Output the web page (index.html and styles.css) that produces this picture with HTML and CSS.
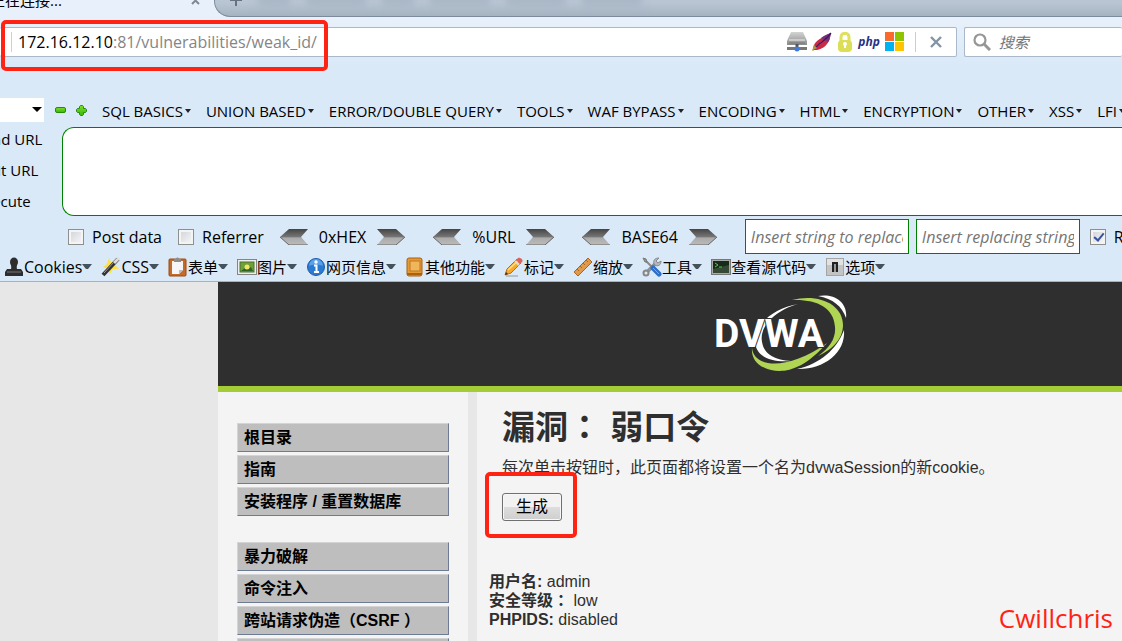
FILE: index.html
```
<!DOCTYPE html>
<html lang="zh-CN">
<head>
  <meta charset="UTF-8" />
  <meta name="viewport" content="width=device-width, initial-scale=1.0"/>
  <title>漏洞： 弱口令</title>
  <link rel="stylesheet" href="styles.css">
</head>

<body>
  <!-- Shared shapes -->
  <svg class="defs" aria-hidden="true">
    <defs>
      <linearGradient id="steel" x1="0" y1="0" x2="0" y2="1">
        <stop offset="0" stop-color="#444"/>
        <stop offset=".5" stop-color="#777"/>
        <stop offset=".55" stop-color="#aaa"/>
        <stop offset="1" stop-color="#bbb"/>
      </linearGradient>
      <linearGradient id="green" x1="0" y1="0" x2="0" y2="1">
        <stop offset="0" stop-color="#7fdc2c"/>
        <stop offset="1" stop-color="#35b80a"/>
      </linearGradient>
      <linearGradient id="silver" x1="0" y1="0" x2="0" y2="1">
        <stop offset="0" stop-color="#d4d4d4"/>
        <stop offset="1" stop-color="#8a8a8a"/>
      </linearGradient>
      <symbol id="arrow-left" viewBox="0 0 28 16">
        <path d="M0 8 9 0H28L21 8l7 8H9z" fill="url(#steel)"/>
        <path d="M0 8 9 16H28" fill="none" stroke="#666"/>
      </symbol>
      <symbol id="arrow-right" viewBox="0 0 28 16">
        <path d="M28 8 19 0H0L7 8l-7 8H19z" fill="url(#steel)"/>
        <path d="M28 8 19 16H0" fill="none" stroke="#666"/>
      </symbol>
      <symbol id="caret" viewBox="0 0 10 6">
        <path d="M0 0h10L6 5H4z" fill="#43525c"/>
      </symbol>
      <symbol id="small-caret" viewBox="0 0 6 4">
        <path d="M0 0h6L3 4z" fill="#222"/>
      </symbol>
    </defs>
  </svg>

  <!-- Tabs -->
  <div class="tabs">
    <div class="tab">
      <span class="tab-title">正在连接...</span>
      <button class="tab-close" aria-label="关闭标签页">
        <svg width="9" height="9" viewBox="0 0 9 9"><path d="M1 1l7 7M8 1 1 8" stroke="#7e8995" stroke-width="2"/></svg>
      </button>
    </div>
    <div class="tab-rest">
      <button class="new-tab" aria-label="新标签页">
        <svg width="12" height="12" viewBox="0 0 12 12"><path d="M6 0v12M0 6h12" stroke="#66727e" stroke-width="2"/></svg>
      </button>
      <span class="smudge"></span>
      <span class="smudge wide"></span>
      <span class="smudge"></span>
      <span class="smudge wide"></span>
      <span class="smudge wide"></span>
      <span class="smudge wide"></span>
    </div>
  </div>

  <!-- Address bar -->
  <div class="nav-bar">
    <div class="url-box">
      <div class="url"><b>172.16.12.10</b>:81/vulnerabilities/weak_id/</div>
      <div class="url-icons">
        <svg width="20" height="20" viewBox="0 0 20 20">
          <path d="M4 0h12l4 9v4H0V9z" fill="url(#silver)"/>
          <path d="M2 8h16" stroke="#eee"/>
          <path d="M2 11h16" stroke="#777"/>
          <path d="M0 15h20v3H0z" fill="#777"/>
          <path d="M10 12v3" stroke="#555" stroke-width="3"/>
          <circle cx="10" cy="17" r="2.5" fill="#3b7ee0"/>
        </svg>
        <svg width="20" height="20" viewBox="0 0 20 20">
          <path d="M1 18C1 11 6 8 11 5c4-2 5-3 8-4-1 4-1 8-4 11-3 4-8 6-12 6z" fill="#cb2848"/>
          <path d="M9 6c4-3 7-4 10-5-1 3-1 7-3 9" fill="#7b2d7c"/>
          <path d="M1 18c4-3 5-6 9-8 4-3 6-5 9-9" fill="none" stroke="#35205c" stroke-width="1.3"/>
          <path d="M0 19l2-6 3 3z" fill="#b9933a"/>
        </svg>
        <svg width="16" height="20" viewBox="0 0 16 20">
          <path d="M4 9V5c0-5 8-5 8 0v4" fill="none" stroke="#dfe05c" stroke-width="3"/>
          <rect x="1" y="8" width="14" height="12" rx="4" fill="#dcde55"/>
          <circle cx="8" cy="12" r="2" fill="#fff"/>
          <path d="M8 12v4" stroke="#fff" stroke-width="2"/>
        </svg>
        <span class="php">php</span>
        <svg width="20" height="20" viewBox="0 0 20 20">
          <path d="M0 0h9v9H0z" fill="#fb6a2d"/>
          <path d="M10 0h9v9h-9z" fill="#8fc400"/>
          <path d="M0 10h9v9H0z" fill="#00b2f0"/>
          <path d="M10 10h9v9h-9z" fill="#ffc400"/>
        </svg>
      </div>
      <button class="stop" aria-label="停止">
        <svg width="12" height="12" viewBox="0 0 12 12"><path d="M1 1l10 10M11 1 1 11" stroke="#8494a3" stroke-width="2.4"/></svg>
      </button>
    </div>
    <div class="search-box">
      <svg width="18" height="18" viewBox="0 0 18 18"><circle cx="7" cy="7" r="5.5" fill="none" stroke="#969696" stroke-width="2.2"/><path d="M11 11l6 6" stroke="#969696" stroke-width="3"/></svg>
      <input type="text" class="search" placeholder="搜索" aria-label="搜索">
    </div>
    <div class="mark mark-url"></div>
  </div>

  <!-- HackBar -->
  <div class="hackbar">
    <div class="hack-menu">
      <div class="picker">
        <select aria-label="配置"><option></option></select>
        <svg class="picker-caret" width="10" height="5" viewBox="0 0 10 5"><path d="M0 0h10L5 5z" fill="#000"/></svg>
      </div>
      <button class="hack-icon" aria-label="删除"><svg width="11" height="6" viewBox="0 0 11 6"><rect x=".5" y=".5" width="10" height="5" rx="1.5" fill="url(#green)" stroke="#258b08"/></svg></button>
      <button class="hack-icon" aria-label="添加"><svg width="11" height="11" viewBox="0 0 11 11"><path d="M3.500 1.500l1-1h2l1 1v2h2l1 1v2l-1 1h-2v2l-1 1h-2l-1-1v-2h-2l-1-1v-2l1-1h2z" fill="url(#green)" stroke="#258b08"/></svg></button>
      <div class="menus">
        <button>SQL BASICS<svg width="6" height="4"><use href="#small-caret"/></svg></button>
        <button>UNION BASED<svg width="6" height="4"><use href="#small-caret"/></svg></button>
        <button>ERROR/DOUBLE QUERY<svg width="6" height="4"><use href="#small-caret"/></svg></button>
        <button>TOOLS<svg width="6" height="4"><use href="#small-caret"/></svg></button>
        <button>WAF BYPASS<svg width="6" height="4"><use href="#small-caret"/></svg></button>
        <button>ENCODING<svg width="6" height="4"><use href="#small-caret"/></svg></button>
        <button>HTML<svg width="6" height="4"><use href="#small-caret"/></svg></button>
        <button>ENCRYPTION<svg width="6" height="4"><use href="#small-caret"/></svg></button>
        <button>OTHER<svg width="6" height="4"><use href="#small-caret"/></svg></button>
        <button>XSS<svg width="6" height="4"><use href="#small-caret"/></svg></button>
        <button>LFI<svg width="6" height="4"><use href="#small-caret"/></svg></button>
      </div>
    </div>

    <div class="hack-body">
      <div class="hack-actions">
        <button>Load URL</button>
        <button>Split URL</button>
        <button>Execute</button>
      </div>
      <textarea class="hack-url" aria-label="URL"></textarea>
    </div>

    <div class="hack-options">
      <label class="check"><input type="checkbox">Post data</label>
      <label class="check"><input type="checkbox">Referrer</label>
      <div class="convert">
        <button aria-label="解码"><svg width="28" height="16"><use href="#arrow-left"/></svg></button>
        <span>0xHEX</span>
        <button aria-label="编码"><svg width="28" height="16"><use href="#arrow-right"/></svg></button>
      </div>
      <div class="convert">
        <button aria-label="解码"><svg width="28" height="16"><use href="#arrow-left"/></svg></button>
        <span>%URL</span>
        <button aria-label="编码"><svg width="28" height="16"><use href="#arrow-right"/></svg></button>
      </div>
      <div class="convert">
        <button aria-label="解码"><svg width="28" height="16"><use href="#arrow-left"/></svg></button>
        <span>BASE64</span>
        <button aria-label="编码"><svg width="28" height="16"><use href="#arrow-right"/></svg></button>
      </div>
      <div class="replace">
        <input type="text" placeholder="Insert string to replace" aria-label="Insert string to replace">
        <input type="text" placeholder="Insert replacing string" aria-label="Insert replacing string">
        <label class="check"><input type="checkbox" checked>Replace All</label>
      </div>
    </div>
  </div>

  <!-- Web developer toolbar -->
  <div class="dev-bar">
    <button class="latin">
      <svg width="20" height="20" viewBox="0 0 20 20"><path d="M6 5c0-6 8-6 8 0 0 3-2 3-1 7h4l2 3v4H1v-4l2-3h4c1-4-1-4-1-7z" fill="#2e2e2e"/><path d="M3 15h14" stroke="#777"/></svg>
      Cookies<svg width="10" height="6"><use href="#caret"/></svg>
    </button>
    <button class="latin">
      <svg width="20" height="20" viewBox="0 0 20 20"><path d="M8 1l2 4 5-3-1 6 4 4-6 0-3 5-2-5-5-2 4-3z" fill="#ffdf4a"/><path d="M2 18 17 2" stroke="#333" stroke-width="4"/><path d="M13 6l5-5" stroke="#ddd" stroke-width="3"/><path d="M3 16 13 5" stroke="#999"/></svg>
      CSS<svg width="10" height="6"><use href="#caret"/></svg>
    </button>
    <button>
      <svg width="20" height="20" viewBox="0 0 20 20"><rect x="1" y="2" width="17" height="17" rx="1" fill="#c56a28" stroke="#9a4c16"/><path d="M4 4h11v9l-4 4H4z" fill="#f6f6f6"/><path d="M15 13h-4v4z" fill="#bbb"/><path d="M6 2h2c0-2 3-2 3 0h2v3H6z" fill="#8c8c8c"/></svg>
      表单<svg width="10" height="6"><use href="#caret"/></svg>
    </button>
    <button>
      <svg width="20" height="20" viewBox="0 0 20 20"><rect x=".5" y="2.500" width="19" height="15" fill="#eee" stroke="#858585"/><rect x="3" y="5" width="14" height="10" fill="#6f9f37" stroke="#49722a"/><path d="M4 14l4-3 3 1 3-2 2 4z" fill="#2d6426"/><circle cx="10" cy="10" r="2.500" fill="#f1e56a"/></svg>
      图片<svg width="10" height="6"><use href="#caret"/></svg>
    </button>
    <button>
      <svg width="20" height="20" viewBox="0 0 20 20"><circle cx="10" cy="10" r="8.500" fill="#2a7ad2" stroke="#1d5cab"/><path d="M3 9a7 7 0 0 1 14 0c-4-2-10-2-14 0z" fill="#5aa1ea"/><circle cx="10" cy="5" r="1.700" fill="#fff"/><path d="M8 8.500h2.500V15M8 15h5" fill="none" stroke="#fff" stroke-width="2"/></svg>
      网页信息<svg width="10" height="6"><use href="#caret"/></svg>
    </button>
    <button>
      <svg width="20" height="20" viewBox="0 0 20 20"><rect x="2" y="1" width="15" height="18" rx="2" fill="#e69a36" stroke="#a9600f"/><rect x="5" y="4" width="10" height="10" fill="#f0b65c" stroke="#bd7822"/><path d="M2 17h15" stroke="#a9600f" stroke-width="2"/></svg>
      其他功能<svg width="10" height="6"><use href="#caret"/></svg>
    </button>
    <button>
      <svg width="20" height="20" viewBox="0 0 20 20"><path d="M2 19h12" stroke="#b9c0c7" stroke-width="2"/><path d="M1 18l2-6L13 2l4 4L7 16z" fill="#f8a928" stroke="#c06c13"/><path d="M4 13 14 4" stroke="#ffe08a" stroke-width="1.500"/><path d="M12 3l2-2c2-1 6 2 4 4l-2 2z" fill="#dc6262"/><path d="M11 4l4 4" stroke="#ddd" stroke-width="2"/><path d="M1 18l1-3 2 2z" fill="#333"/></svg>
      标记<svg width="10" height="6"><use href="#caret"/></svg>
    </button>
    <button>
      <svg width="20" height="20" viewBox="0 0 20 20"><path d="M1 15 15 1l4 4L5 19z" fill="#df9a4c" stroke="#aa651f"/><path d="M4 12l2 2M7 9l2 2M10 6l2 2M13 3l2 2" stroke="#a8662a"/></svg>
      缩放<svg width="10" height="6"><use href="#caret"/></svg>
    </button>
    <button>
      <svg width="20" height="20" viewBox="0 0 20 20"><path d="M4 16 14 6" stroke="#8d9499" stroke-width="3.500"/><path d="M12 7c-1-4 1-6 5-6l-3 3 2 2 3-2c0 4-3 6-6 4z" fill="#b5b9bc" stroke="#83888c"/><circle cx="4" cy="16" r="2.500" fill="#e5e8ea" stroke="#83888c" stroke-width="2"/><path d="M3 3l7 7" stroke="#888" stroke-width="2"/><path d="M1 1l3 1 1 3-2 0z" fill="#999" stroke="#777"/><path d="M11 11l6 6" stroke="#2c6fca" stroke-width="5" stroke-linecap="round"/><path d="M11 11l6 6" stroke="#75abed"/></svg>
      工具<svg width="10" height="6"><use href="#caret"/></svg>
    </button>
    <button>
      <svg width="20" height="20" viewBox="0 0 20 20"><rect x=".5" y="2.500" width="19" height="15" fill="#aaa" stroke="#777"/><rect x="2" y="4" width="16" height="12" fill="#172c18"/><path d="M2 12 18 8v8H2z" fill="#344a35"/><path d="M4 6l3 2-3 2M8 10h3" fill="none" stroke="#59c94a"/></svg>
      查看源代码<svg width="10" height="6"><use href="#caret"/></svg>
    </button>
    <button>
      <svg width="20" height="20" viewBox="0 0 20 20"><rect x="1.500" y="1.500" width="17" height="17" fill="#c4c4c4" stroke="#a5a5a5"/><path d="M2 2h16v6H2z" fill="#e2e2e2"/><path d="M7 5h6v10h-2l-1-8-1 8H7z" fill="#222"/><path d="M9 7h2v8H9z" fill="#999"/></svg>
      选项<svg width="10" height="6"><use href="#caret"/></svg>
    </button>
  </div>

  <!-- DVWA page -->
  <div class="page">
    <div class="container">
      <div class="header">
        <svg class="logo" width="134" height="78" viewBox="0 0 134 78" role="img" aria-label="DVWA">
          <path d="M104 2C120-1 134 8 132 24 128 12 119 5 104 2z" fill="#fff"/>
          <path d="M78 6C104-1 129 10 129 31c0 14-11 25-25 31 12-8 18-18 17-29C120 13 102 5 78 6z" fill="#b0d453"/>
          <path d="M130 36c2 24-22 40-47 39 23-5 40-20 47-39z" fill="#fff"/>
          <path d="M38 54c2 20 36 23 75-5C89 76 71 79 57 76 44 73 37 65 38 54z" fill="#b0d453"/>
          <path d="M84 10C62 16 45 32 48 48c2 13 14 18 29 19-20 2-36-5-36-20 0-17 19-33 43-37z" fill="#fff"/>
          <text x="0" y="53" class="logo-text">DVWA</text>
        </svg>
      </div>
      <div class="columns">
        <div class="sidebar">
          <ul class="nav-menu">
            <li><a href="#">根目录</a></li>
            <li><a href="#">指南</a></li>
            <li><a href="#">安装程序 / 重置数据库</a></li>
          </ul>
          <ul class="nav-menu">
            <li><a href="#">暴力破解</a></li>
            <li><a href="#">命令注入</a></li>
            <li><a href="#">跨站请求伪造<span class="centred" lang="zh-TW">（</span>CSRF <span class="centred" lang="zh-TW">）</span></a></li>
            <li><a href="#"></a></li>
          </ul>
        </div>
        <div class="main-content">
          <div class="vulnerable">
            <h1>漏洞<span class="centred" lang="zh-TW">：</span> 弱口令</h1>
            <p>每次单击按钮时，此页面都将设置一个名为dvwaSession的新cookie。</p>
            <form class="generate">
              <button type="button" class="generate-btn">生成</button>
              <div class="mark mark-button"></div>
            </form>
          </div>
          <div class="system-info">
            <div><b>用户名:</b> admin</div>
            <div><b>安全等级<span class="centred" lang="zh-TW">：</span></b> low</div>
            <div><b>PHPIDS:</b> disabled</div>
          </div>
        </div>
      </div>
    </div>
    <div class="signature">Cwillchris</div>
  </div>
</body>
</html>
```
FILE: styles.css
```
:root {
  --ui-font: 'Open Sans', 'Noto Sans CJK SC', sans-serif;
  --page-font: 'Liberation Sans', 'Noto Sans CJK SC', sans-serif;
  --toolbar: #dae9f8;
  --field-border: #a9b9c9;
  --hack-green: #008000;
  --mark: #ff2313;
  --dark: #2f2f2f;
  --grey: #e7e7e7;
  --light: #f4f4f4;
}

* {
  box-sizing: border-box;
}

body {
  margin: 0;
  height: 100vh;
  display: flex;
  flex-direction: column;
  overflow: hidden;
  background: var(--toolbar);
  font-family: var(--ui-font);
  font-size: 15px;
  line-height: 20px;
  color: #000;
}

button {
  font: inherit;
  color: inherit;
  background: none;
  border: none;
  padding: 0;
  white-space: nowrap;
}

svg {
  flex: none;
}

.defs {
  position: absolute;
  width: 0;
  height: 0;
}

.mark {
  position: absolute;
  border: 4px solid var(--mark);
  border-radius: 5px;
  pointer-events: none;
}

/* Tabs */
.tabs {
  flex: none;
  display: flex;
  height: 34px;
  margin-top: -17px;
  background: #e8f1fb;
}

.tab {
  width: 214px;
  display: flex;
  align-items: center;
  justify-content: space-between;
  padding-right: 14px;
}

.tab-title {
  margin-left: -10px;
}

.tab-close {
  display: flex;
}

.tab-rest {
  flex: 1;
  display: flex;
  align-items: center;
  gap: 16px;
  padding-left: 15px;
  background: linear-gradient(#b9c5d3 60%, #a5b3c1);
  border: 1px solid #7b8c9c;
  border-width: 0 0 1px 1px;
  border-radius: 0 0 0 16px;
}

.new-tab {
  display: flex;
}

.smudge {
  width: 32px;
  height: 14px;
  background: #a9b6c5;
  filter: blur(4px);
}

.smudge.wide {
  width: 60px;
}

/* Address bar */
.nav-bar {
  position: relative;
  flex: none;
  display: flex;
  gap: 7px;
  padding: 10px 0 8px;
  background: linear-gradient(#e8f1fb, var(--toolbar));
}

.url-box,
.search-box {
  height: 30px;
  min-width: 0;
  display: flex;
  align-items: center;
  background: #fff;
  border: 1px solid var(--field-border);
  border-radius: 2px;
}

.url-box {
  flex: 19;
  border-left: none;
  padding-left: 11px;
}

.search-box {
  flex: 3;
  gap: 8px;
  padding-left: 8px;
  border-right: none;
}

.url {
  flex: 1;
  padding-left: 6px;
  border-left: 1px solid #d0d0d0;
  font-size: 16px;
  color: #858585;
}

.url b {
  font-weight: normal;
  color: #000;
}

.url-icons {
  display: flex;
  align-items: center;
  gap: 5px;
}

.php {
  font: italic bold 12px/20px 'Open Sans', sans-serif;
  color: #1f3285;
}

.stop {
  display: flex;
  margin-left: 10px;
  padding: 4px 14px;
  border-left: 1px solid #ccc;
}

.search {
  flex: 1;
  min-width: 0;
  border: none;
  outline: none;
  padding: 0;
  font: inherit;
}

.search::placeholder {
  color: #757575;
  font-style: italic;
}

.mark-url {
  left: 1px;
  top: 3px;
  width: 327px;
  height: 51px;
}

/* HackBar */
.hackbar {
  flex: none;
  padding-top: 33px;
}

.hack-menu {
  display: flex;
  align-items: center;
  height: 24px;
}

.picker {
  position: relative;
  flex: none;
  width: 44px;
  height: 24px;
  margin-right: 11px;
}

.picker select {
  width: 100%;
  height: 100%;
  border: none;
  border-radius: 0;
  background: #fff;
  appearance: none;
}

.picker-caret {
  position: absolute;
  right: 2px;
  top: 9px;
}

.hack-icon {
  display: flex;
  margin-right: 10px;
}

.menus {
  display: flex;
  gap: 15px;
  padding: 2px 0 0 5px;
}

.menus button {
  display: flex;
  align-items: center;
  gap: 2px;
}

.hack-body {
  display: flex;
  gap: 20px;
  margin-top: 5px;
}

.hack-actions {
  display: flex;
  flex-direction: column;
  align-items: flex-start;
  gap: 11px;
  width: 66px;
  margin-left: -24px;
  padding-top: 2px;
}

.hack-url {
  flex: 1;
  height: 89px;
  background: #fff;
  border: 1px solid var(--hack-green);
  border-right: none;
  border-radius: 12px 0 0 12px;
  resize: none;
}

.hack-options {
  display: flex;
  align-items: center;
  margin-top: 3px;
  padding-left: 68px;
  font-size: 16px;
  white-space: nowrap;
}

.check {
  display: flex;
  align-items: center;
  gap: 8px;
  margin-right: 16px;
}

.check input {
  appearance: none;
  flex: none;
  width: 16px;
  height: 16px;
  margin: 0;
  border: 1px solid #8e8f8f;
  background: linear-gradient(135deg, #cfd3d8, #f8f8f8);
  box-shadow: inset 0 0 0 2px #f4f4f4;
}

.check input:checked::after {
  content: '';
  display: block;
  width: 4px;
  height: 8px;
  margin: 1px 0 0 5px;
  border: solid #39539e;
  border-width: 0 2px 2px 0;
  transform: rotate(40deg);
}

.convert {
  display: flex;
  align-items: center;
  gap: 11px;
  margin-right: 28px;
}

.convert button {
  display: flex;
}

.replace {
  flex: 1;
  display: flex;
  align-items: center;
  gap: 7px;
  min-width: 0;
}

.replace input[type='text'] {
  flex: none;
  width: 164px;
  height: 35px;
  padding: 0 5px;
  border: 1px solid var(--hack-green);
  background: #fff;
  font: inherit;
}

.replace input::placeholder {
  color: #757575;
  font-style: italic;
}

.replace .check {
  margin-left: 3px;
}

/* Web developer toolbar */
.dev-bar {
  flex: none;
  display: flex;
  gap: 9px;
  height: 28px;
  padding: 0 0 1px 4px;
  border-bottom: 1px solid #a0b4c8;
}

.dev-bar button {
  display: flex;
  align-items: center;
}

.dev-bar .latin {
  font-size: 16px;
}

/* DVWA page */
.page {
  position: relative;
  flex: 1;
  min-height: 0;
  padding-left: 218px;
  overflow: hidden;
  background: var(--grey);
  font-family: var(--page-font);
  font-size: 16px;
  color: #2f2f2f;
}

.container {
  height: 100%;
  display: flex;
  flex-direction: column;
}

.header {
  flex: none;
  height: 110px;
  padding: 12px 0 0 496px;
  background: var(--dark);
  border-bottom: 6px solid #a4cc34;
}

.logo {
  display: block;
}

.logo-text {
  font: bold 39px Roboto, sans-serif;
  fill: #fff;
  stroke: var(--dark);
  stroke-width: 2px;
  paint-order: stroke;
}

.columns {
  flex: 1;
  display: flex;
  gap: 9px;
  min-height: 0;
}

.sidebar {
  width: 250px;
  padding: 31px 19px 0;
  background: var(--light);
}

.nav-menu {
  display: flex;
  flex-direction: column;
  gap: 3px;
  list-style: none;
  padding: 0;
  margin: 0 0 26px;
}

.nav-menu a {
  display: block;
  height: 29px;
  padding-left: 6px;
  line-height: 28px;
  background: #bebebe;
  border: 1px solid;
  border-color: #d4d4d4 #6d7b94 #6d7b94 #d4d4d4;
  color: #000;
  font-weight: bold;
  text-decoration: none;
}

.main-content {
  flex: 1;
  padding: 12px 12px 0;
  background: var(--light);
}

.vulnerable {
  padding-left: 13px;
}

h1 {
  margin: 0;
  font-size: 33px;
  line-height: 48px;
}

/* full-width punctuation sits in the middle of its square */
.centred {
  font-family: 'Noto Sans CJK TC', sans-serif;
  line-height: 0;
}

p {
  margin: 6px 0 15px;
}

.generate {
  position: relative;
  margin-bottom: 51px;
}

.generate-btn {
  display: block;
  width: 60px;
  height: 28px;
  border: 1px solid #707070;
  border-radius: 3px;
  background: linear-gradient(#f2f2f2 50%, #dddddd 50%, #cfcfcf);
  box-shadow: inset 0 0 0 1px #f8f8f8;
  color: #000;
}

.mark-button {
  left: -17px;
  top: -21px;
  width: 92px;
  height: 66px;
}

.system-info {
  line-height: 19px;
}

.signature {
  position: absolute;
  right: 9px;
  bottom: 7px;
  font: 26px/32px var(--ui-font);
  color: var(--mark);
}
```
